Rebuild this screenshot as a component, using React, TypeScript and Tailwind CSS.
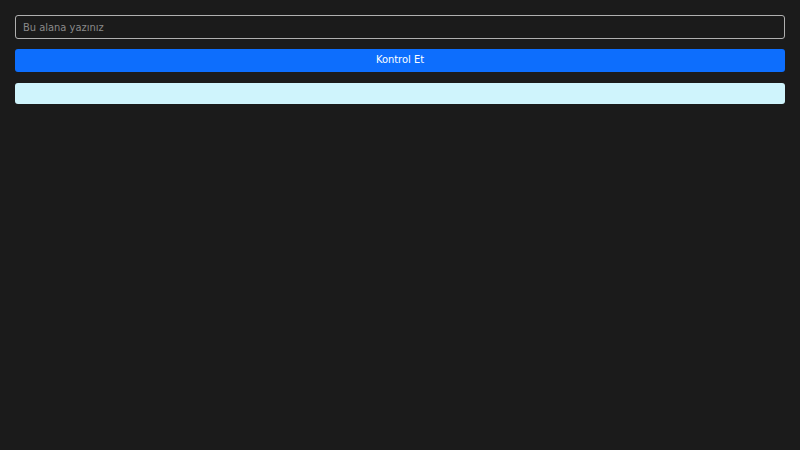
import React from "react";

export default function App() {
  return (
    <div
      className="min-h-[450px] w-full bg-[#1b1b1b] p-[15px] flex flex-col"
      style={{ fontFamily: '"DejaVu Sans Condensed", "DejaVu Sans", sans-serif' }}
    >
      <input
        type="text"
        placeholder="Bu alana yazınız"
        className="h-[24px] w-full rounded-[3px] border border-[#b0b0b0] bg-[#1b1b1b] px-[7px] text-[11px] text-white placeholder:text-[#8a8a8a] outline-none"
      />
      <button className="mt-[10px] h-[23px] w-full rounded-[3px] bg-[#0d6efd] text-[11px] text-white">
        Kontrol Et
      </button>
      <div className="mt-[11px] h-[21px] w-full rounded-[3px] bg-[#cff4fc]" />
    </div>
  );
}
